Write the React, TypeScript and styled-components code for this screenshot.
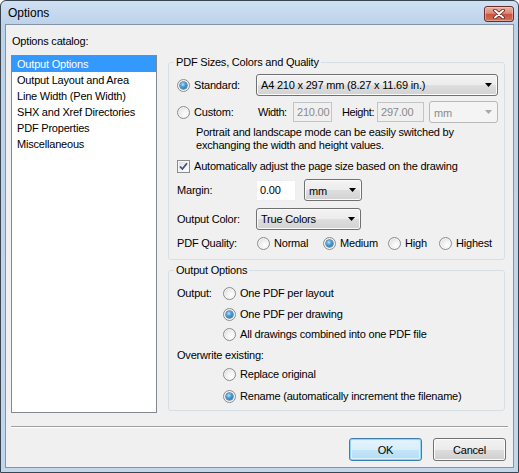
import React from "react";
import styled, { createGlobalStyle, css } from "styled-components";

const GlobalStyle = createGlobalStyle`
  html, body { margin: 0; padding: 0; background: #ffffff; }
  body {
    font-family: "Liberation Sans", Arial, sans-serif;
    font-size: 11px;
    color: #000;
    letter-spacing: -0.2px;
  }
  * { box-sizing: border-box; }
`;

const Window = styled.div`
  width: 519px;
  height: 473px;
  border: 1px solid #3a4552;
  border-radius: 6px 6px 0 0;
  background: linear-gradient(180deg, #cfe0f2 0px, #bdd3ea 23px, #c2d6ec 100%);
  padding: 0 4px 4px 4px;
  display: flex;
  flex-direction: column;
  overflow: hidden;
`;

const TitleBar = styled.div`
  height: 23px;
  flex: none;
  display: flex;
  align-items: center;
  justify-content: space-between;
  padding-left: 3px;
`;

const Title = styled.span`
  font-size: 12px;
  letter-spacing: 0;
  color: #000;
`;

const CloseButton = styled.div`
  width: 30px;
  height: 16px;
  margin-top: 2px;
  border: 1px solid #6e2b24;
  border-radius: 3px;
  background: linear-gradient(180deg, #eab0a4 0%, #da8a79 45%, #c8533f 52%, #d0705b 100%);
  box-shadow: inset 0 0 0 1px rgba(255, 220, 210, 0.45);
  display: flex;
  align-items: center;
  justify-content: center;
`;

const Client = styled.div`
  flex: 1;
  border: 1px solid #8394a8;
  background: #f0f0f0;
  display: flex;
  flex-direction: column;
`;

const Main = styled.div`
  height: 388px;
  flex: none;
  display: flex;
  gap: 11px;
  padding: 10px 8px 0 5px;
`;

const LeftCol = styled.div`
  width: 146px;
  flex: none;
  display: flex;
  flex-direction: column;
`;

const Caption = styled.div`
  height: 13px;
  line-height: 13px;
  padding-left: 1px;
  margin-bottom: 7px;
`;

const ListBox = styled.div`
  height: 358px;
  border: 1px solid #828790;
  background: #ffffff;
`;

const ListItem = styled.div<{ $selected?: boolean }>`
  height: 16px;
  line-height: 16px;
  padding-left: 5px;
  white-space: nowrap;
  ${(p) =>
    p.$selected &&
    css`
      background: #3399ff;
      color: #ffffff;
    `}
`;

const RightCol = styled.div`
  flex: 1;
  min-width: 0;
  padding-top: 21px;
  display: flex;
  flex-direction: column;
`;

const Group = styled.fieldset<{ $pad: string; $mt?: number }>`
  margin: ${(p) => p.$mt ?? 0}px 0 0 0;
  border: 1px solid #d5dfe5;
  border-radius: 3px;
  padding: ${(p) => p.$pad};
  min-width: 0;
`;

const Legend = styled.legend`
  padding: 0 2px;
  margin-left: -3px;
  line-height: 13px;
  font-size: 11px;
`;

const Row = styled.div<{ $h: number; $mt?: number; $indent?: number }>`
  display: flex;
  align-items: center;
  height: ${(p) => p.$h}px;
  margin-top: ${(p) => p.$mt ?? 0}px;
  padding-left: ${(p) => p.$indent ?? 0}px;
  white-space: nowrap;
`;

const LabelCol = styled.div<{ $w: number }>`
  width: ${(p) => p.$w}px;
  flex: none;
  display: flex;
  align-items: center;
`;

const FieldLabel = styled.span<{ $w: number; $pl: number }>`
  width: ${(p) => p.$w}px;
  padding-left: ${(p) => p.$pl}px;
  flex: none;
  letter-spacing: -0.4px;
`;

const Option = styled.label<{ $w?: number }>`
  display: flex;
  align-items: center;
  gap: 4px;
  ${(p) => (p.$w ? `width: ${p.$w}px; flex: none;` : "")}
`;

const Radio = styled.span<{ $checked?: boolean }>`
  width: 13px;
  height: 13px;
  flex: none;
  border-radius: 50%;
  border: 1px solid #8c8c8c;
  background: radial-gradient(circle at 65% 65%, #ffffff 0%, #f1f1f1 40%, #d3d3d3 100%);
  box-shadow: inset 0 0 0 1px #f6f6f6;
  display: flex;
  align-items: center;
  justify-content: center;
  ${(p) =>
    p.$checked &&
    css`
      &::after {
        content: "";
        width: 7px;
        height: 7px;
        border-radius: 50%;
        background: radial-gradient(circle at 40% 35%, #b6e4ff 0%, #49a2de 38%, #1a5a8e 100%);
        box-shadow: 0 0 0 0.5px #174a74;
      }
    `}
`;

const CheckBox = styled.span`
  width: 13px;
  height: 13px;
  flex: none;
  border: 1px solid #8c8c8c;
  background: linear-gradient(135deg, #dcdcdc 0%, #f4f4f4 60%, #ffffff 100%);
  box-shadow: inset 0 0 0 1px #f6f6f6;
  display: flex;
  align-items: center;
  justify-content: center;
`;

const Combo = styled.div<{ $w: number; $h?: number; $ml?: number; $disabled?: boolean }>`
  width: ${(p) => p.$w}px;
  height: ${(p) => p.$h ?? 22}px;
  margin-left: ${(p) => p.$ml ?? 0}px;
  flex: none;
  border-radius: 3px;
  display: flex;
  align-items: center;
  justify-content: space-between;
  padding: 0 5px 0 4px;
  ${(p) =>
    p.$disabled
      ? css`
          border: 1px solid #b5b9bc;
          background: #f4f4f4;
          color: #8a8a8a;
        `
      : css`
          border: 1px solid #707070;
          background: linear-gradient(180deg, #f3f3f3 0%, #ececec 50%, #dedede 51%, #d2d2d2 100%);
          box-shadow: inset 0 0 0 1px #fbfbfb;
          color: #000;
        `}
`;

const ComboText = styled.span<{ $dy?: number }>`
  padding-top: ${(p) => p.$dy ?? 0}px;
`;

const TextInput = styled.input<{ $w: number; $h: number; $disabled?: boolean }>`
  width: ${(p) => p.$w}px;
  height: ${(p) => p.$h}px;
  flex: none;
  font: inherit;
  letter-spacing: inherit;
  padding: 0 0 0 3px;
  margin: 0;
  outline: none;
  ${(p) =>
    p.$disabled
      ? css`
          border: 1px solid #c2c5c8;
          background: #f0f0f0;
          color: #8a8a8a;
        `
      : css`
          border: 1px solid #eceef1;
          background: #ffffff;
          color: #000;
        `}
`;

const Description = styled.div`
  margin-top: 3px;
  padding-left: 19px;
  line-height: 13px;
  white-space: nowrap;
`;

const Separator = styled.div`
  margin: 13px 5px 0 5px;
  height: 2px;
  border-top: 1px solid #a0a0a0;
  border-bottom: 1px solid #ffffff;
`;

const ButtonBar = styled.div`
  margin-top: 10px;
  display: flex;
  justify-content: flex-end;
  gap: 11px;
  padding-right: 7px;
`;

const Button = styled.div<{ $default?: boolean }>`
  width: 73px;
  height: 23px;
  border-radius: 3px;
  display: flex;
  align-items: center;
  justify-content: center;
  ${(p) =>
    p.$default
      ? css`
          border: 1px solid #3c7fb1;
          background: linear-gradient(180deg, #e6f4fc 0%, #d8eefb 50%, #c4e5f8 51%, #b4dcf3 100%);
          box-shadow: inset 0 0 0 1px #8fd4f5, inset 0 0 0 2px #def1fb;
        `
      : css`
          border: 1px solid #707070;
          background: linear-gradient(180deg, #f2f2f2 0%, #ebebeb 50%, #dddddd 51%, #cfcfcf 100%);
          box-shadow: inset 0 0 0 1px #fcfcfc;
        `}
`;

const Arrow = ({ color = "#000" }: { color?: string }) => (
  <svg width="7" height="4" viewBox="0 0 7 4">
    <path d="M0 0h7L3.5 4z" fill={color} />
  </svg>
);

const CloseGlyph = () => (
  <svg width="12" height="10" viewBox="0 0 12 10">
    <path d="M2 1.5L10 8.5M10 1.5L2 8.5" stroke="#5b1c14" strokeWidth="3.6" strokeLinecap="round" />
    <path d="M2 1.5L10 8.5M10 1.5L2 8.5" stroke="#ffffff" strokeWidth="2" strokeLinecap="round" />
  </svg>
);

const CheckGlyph = () => (
  <svg width="9" height="9" viewBox="0 0 9 9">
    <path d="M1 4.5L3.4 7L8 1.2" fill="none" stroke="#3d4f86" strokeWidth="1.8" />
  </svg>
);

const catalog = [
  "Output Options",
  "Output Layout and Area",
  "Line Width (Pen Width)",
  "SHX and Xref Directories",
  "PDF Properties",
  "Miscellaneous",
];

export default function App() {
  return (
    <>
      <GlobalStyle />
      <Window>
        <TitleBar>
          <Title>Options</Title>
          <CloseButton>
            <CloseGlyph />
          </CloseButton>
        </TitleBar>
        <Client>
          <Main>
            <LeftCol>
              <Caption>Options catalog:</Caption>
              <ListBox>
                {catalog.map((c, i) => (
                  <ListItem key={c} $selected={i === 0}>
                    {c}
                  </ListItem>
                ))}
              </ListBox>
            </LeftCol>
            <RightCol>
              <Group $pad="5px 6px 9px 8px">
                <Legend>PDF Sizes, Colors and Quality</Legend>
                <Row $h={22}>
                  <LabelCol $w={79}>
                    <Option>
                      <Radio $checked />
                      Standard:
                    </Option>
                  </LabelCol>
                  <Combo $w={242}>
                    <ComboText>A4 210 x 297 mm (8.27 x 11.69 in.)</ComboText>
                    <Arrow />
                  </Combo>
                </Row>
                <Row $h={22} $mt={5}>
                  <LabelCol $w={79}>
                    <Option>
                      <Radio />
                      Custom:
                    </Option>
                  </LabelCol>
                  <FieldLabel $w={37} $pl={2}>Width:</FieldLabel>
                  <TextInput $w={39} $h={20} $disabled readOnly value="210.00" />
                  <FieldLabel $w={45} $pl={10}>Height:</FieldLabel>
                  <TextInput $w={47} $h={20} $disabled readOnly value="297.00" />
                  <Combo $w={69} $ml={5} $disabled>
                    <ComboText $dy={2}>mm</ComboText>
                    <Arrow color="#a8a8a8" />
                  </Combo>
                </Row>
                <Description>
                  Portrait and landscape mode can be easily switched by
                  <br />
                  exchanging the width and height values.
                </Description>
                <Row $h={14} $mt={7}>
                  <Option>
                    <CheckBox>
                      <CheckGlyph />
                    </CheckBox>
                    Automatically adjust the page size based on the drawing
                  </Option>
                </Row>
                <Row $h={22} $mt={6}>
                  <LabelCol $w={79}>Margin:</LabelCol>
                  <TextInput $w={40} $h={21} readOnly value="0.00" />
                  <Combo $w={58} $ml={8}>
                    <ComboText $dy={2}>mm</ComboText>
                    <Arrow />
                  </Combo>
                </Row>
                <Row $h={22} $mt={7}>
                  <LabelCol $w={79}>Output Color:</LabelCol>
                  <Combo $w={105}>
                    <ComboText>True Colors</ComboText>
                    <Arrow />
                  </Combo>
                </Row>
                <Row $h={14} $mt={6}>
                  <LabelCol $w={80}>PDF Quality:</LabelCol>
                  <Option $w={66}>
                    <Radio />
                    Normal
                  </Option>
                  <Option $w={65}>
                    <Radio $checked />
                    Medium
                  </Option>
                  <Option $w={51}>
                    <Radio />
                    High
                  </Option>
                  <Option>
                    <Radio />
                    Highest
                  </Option>
                </Row>
              </Group>
              <Group $pad="9px 6px 7px 8px" $mt={4}>
                <Legend>Output Options</Legend>
                <Row $h={14}>
                  <LabelCol $w={46}>Output:</LabelCol>
                  <Option>
                    <Radio />
                    One PDF per layout
                  </Option>
                </Row>
                <Row $h={14} $mt={7} $indent={46}>
                  <Option>
                    <Radio $checked />
                    One PDF per drawing
                  </Option>
                </Row>
                <Row $h={14} $mt={6} $indent={46}>
                  <Option>
                    <Radio />
                    All drawings combined into one PDF file
                  </Option>
                </Row>
                <Row $h={14} $mt={7}>
                  Overwrite existing:
                </Row>
                <Row $h={14} $mt={5} $indent={46}>
                  <Option>
                    <Radio />
                    Replace original
                  </Option>
                </Row>
                <Row $h={14} $mt={8} $indent={46}>
                  <Option>
                    <Radio $checked />
                    Rename (automatically increment the filename)
                  </Option>
                </Row>
              </Group>
            </RightCol>
          </Main>
          <Separator />
          <ButtonBar>
            <Button $default>OK</Button>
            <Button>Cancel</Button>
          </ButtonBar>
        </Client>
      </Window>
    </>
  );
}
